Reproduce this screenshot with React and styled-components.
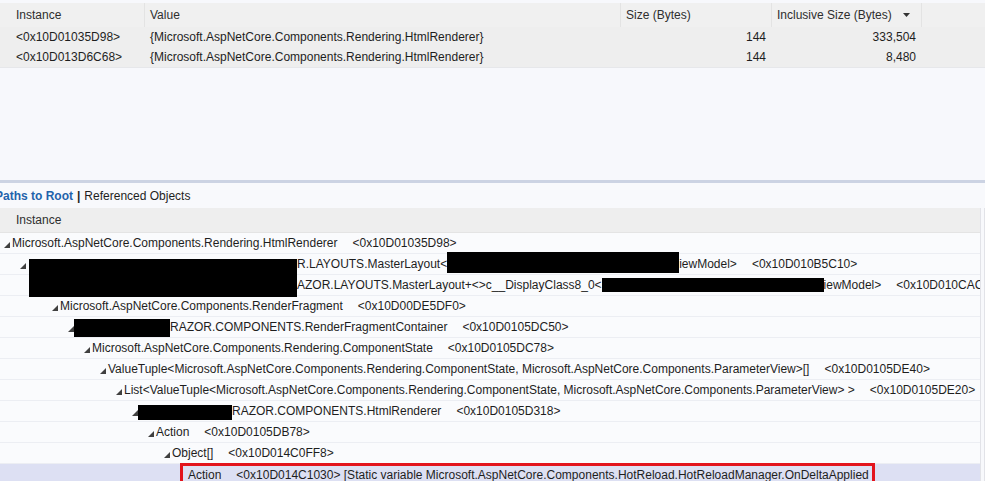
import React from "react"
import styled, { createGlobalStyle } from "styled-components"

const GlobalStyle = createGlobalStyle`
  html, body {
    margin: 0;
    padding: 0;
    background: #f7f8fc;
  }
  body {
    font-family: "Liberation Sans", Arial, sans-serif;
    font-size: 12px;
    color: #1e1e1e;
  }
`

const topRows = [
  { instance: "<0x10D01035D98>", value: "{Microsoft.AspNetCore.Components.Rendering.HtmlRenderer}", size: "144", inclusive: "333,504" },
  { instance: "<0x10D013D6C68>", value: "{Microsoft.AspNetCore.Components.Rendering.HtmlRenderer}", size: "144", inclusive: "8,480" },
]

const Expander = () => (
  <ExpanderBox>
    <svg width="6" height="6" viewBox="0 0 6 6">
      <polygon points="6,0 6,6 0,6" fill="#404040" />
    </svg>
  </ExpanderBox>
)

const SortArrow = () => (
  <svg width="7" height="4" viewBox="0 0 7 4" style={{ marginLeft: 11 }}>
    <polygon points="0,0 7,0 3.5,4" fill="#333" />
  </svg>
)

const App = () => {
  return (
    <>
      <GlobalStyle />
      <Window>
        <TopPanel>
          <HeaderRow>
            <HeaderCell $first>Instance</HeaderCell>
            <HeaderCell>Value</HeaderCell>
            <HeaderCell>Size (Bytes)</HeaderCell>
            <HeaderCell>
              Inclusive Size (Bytes)
              <SortArrow />
            </HeaderCell>
            <HeaderCell $last />
          </HeaderRow>
          {topRows.map((r) => (
            <DataRow key={r.instance}>
              <DataCell $first>{r.instance}</DataCell>
              <DataCell>{r.value}</DataCell>
              <DataCell $num>{r.size}</DataCell>
              <DataCell $num>{r.inclusive}</DataCell>
              <DataCell />
            </DataRow>
          ))}
        </TopPanel>

        <Splitter />

        <BottomPanel>
          <TabBar>
            <ActiveTab>Paths to Root</ActiveTab>
            <TabDivider>|</TabDivider>
            <Tab>Referenced Objects</Tab>
          </TabBar>
          <TreeArea>
            <TreeMain>
              <TreeHeader>Instance</TreeHeader>

              <TreeRow $level={0}>
                <Expander />
                <Name>Microsoft.AspNetCore.Components.Rendering.HtmlRenderer</Name>
                <Address>&lt;0x10D01035D98&gt;</Address>
              </TreeRow>

              <TreeRow $level={1}>
                <Expander />
                <Redact $w={268} $top={5} $h={16} $x={1} />
                <Name>R.LAYOUTS.MasterLayout&lt;</Name>
                <Redact $w={232} $top={-2} $h={21} />
                <Name>iewModel&gt;</Name>
                <Address>&lt;0x10D010B5C10&gt;</Address>
              </TreeRow>

              <TreeRow $level={1}>
                <Redact $w={268} $top={0} $h={22} $x={9} />
                <Name>AZOR.LAYOUTS.MasterLayout+&lt;&gt;c__DisplayClass8_0&lt;</Name>
                <Redact $w={222} $top={3} $h={14} />
                <Name>iewModel&gt;</Name>
                <Address>&lt;0x10D010CAC18&gt;</Address>
              </TreeRow>

              <TreeRow $level={3}>
                <Expander />
                <Name>Microsoft.AspNetCore.Components.RenderFragment</Name>
                <Address>&lt;0x10D00DE5DF0&gt;</Address>
              </TreeRow>

              <TreeRow $level={4}>
                <Expander />
                <Redact $w={96} $top={2} $h={18} $x={-2} />
                <Name>RAZOR.COMPONENTS.RenderFragmentContainer</Name>
                <Address>&lt;0x10D0105DC50&gt;</Address>
              </TreeRow>

              <TreeRow $level={5}>
                <Expander />
                <Name>Microsoft.AspNetCore.Components.Rendering.ComponentState</Name>
                <Address>&lt;0x10D0105DC78&gt;</Address>
              </TreeRow>

              <TreeRow $level={6}>
                <Expander />
                <Name>
                  ValueTuple&lt;Microsoft.AspNetCore.Components.Rendering.ComponentState,
                  Microsoft.AspNetCore.Components.ParameterView&gt;[]
                </Name>
                <Address>&lt;0x10D0105DE40&gt;</Address>
              </TreeRow>

              <TreeRow $level={7}>
                <Expander />
                <Name>
                  List&lt;ValueTuple&lt;Microsoft.AspNetCore.Components.Rendering.ComponentState,
                  Microsoft.AspNetCore.Components.ParameterView&gt; &gt;
                </Name>
                <Address>&lt;0x10D0105DE20&gt;</Address>
              </TreeRow>

              <TreeRow $level={8}>
                <Expander />
                <Redact $w={94} $top={4} $h={15} $x={-2} />
                <Name>RAZOR.COMPONENTS.HtmlRenderer</Name>
                <Address>&lt;0x10D0105D318&gt;</Address>
              </TreeRow>

              <TreeRow $level={9}>
                <Expander />
                <Name>Action</Name>
                <Address>&lt;0x10D0105DB78&gt;</Address>
              </TreeRow>

              <TreeRow $level={10}>
                <Expander />
                <Name>Object[]</Name>
                <Address>&lt;0x10D014C0FF8&gt;</Address>
              </TreeRow>

              <TreeRow $level={11} $selected>
                <Outline>
                  <Name>Action</Name>
                  <Address>&lt;0x10D014C1030&gt;</Address>
                  <Name>
                    &nbsp;[Static variable Microsoft.AspNetCore.Components.HotReload.HotReloadManager.OnDeltaApplied
                  </Name>
                </Outline>
              </TreeRow>
            </TreeMain>
            <Gutter />
          </TreeArea>
        </BottomPanel>
      </Window>
    </>
  )
}

export default App

const Window = styled.div`
  width: 985px;
  height: 481px;
  overflow: hidden;
  display: flex;
  flex-direction: column;
  background: #f7f8fc;
`

const TopPanel = styled.div`
  height: 180px;
  flex-shrink: 0;
  box-sizing: border-box;
  padding-top: 3px;
  background: #f7f8fc;
`

const columns = "145px 476px 151px 150px 1fr"

const HeaderRow = styled.div`
  display: grid;
  grid-template-columns: ${columns};
  height: 24px;
  background: #f0f0f0;
`

const HeaderCell = styled.div`
  display: flex;
  align-items: center;
  padding-left: ${({ $first }) => ($first ? "16px" : "5px")};
  border-right: ${({ $last }) => ($last ? "none" : "1px solid #e3e3e3")};
  color: #2e2e2e;
  white-space: nowrap;
`

const DataRow = styled.div`
  display: grid;
  grid-template-columns: ${columns};
  height: 20px;
  background: #eeeeee;

  &:last-child {
    border-bottom: 1px solid #e6e7ea;
  }
`

const DataCell = styled.div`
  display: flex;
  align-items: center;
  justify-content: ${({ $num }) => ($num ? "flex-end" : "flex-start")};
  padding-left: ${({ $first }) => ($first ? "16px" : "5px")};
  padding-right: ${({ $num }) => ($num ? "6px" : "0")};
  white-space: nowrap;
`

const Splitter = styled.div`
  height: 3px;
  flex-shrink: 0;
  background: #ccd3e3;
`

const BottomPanel = styled.div`
  flex: 1;
  display: flex;
  flex-direction: column;
  overflow: hidden;
  background: #f8f9fc;
`

const TabBar = styled.div`
  height: 25px;
  flex-shrink: 0;
  display: flex;
  align-items: center;
  white-space: nowrap;
`

const ActiveTab = styled.span`
  margin-left: -5px;
  font-weight: bold;
  color: #1f63ab;
`

const TabDivider = styled.span`
  margin: 0 4px;
  font-weight: bold;
  color: #1e1e1e;
`

const Tab = styled.span`
  color: #1e1e1e;
`

const TreeArea = styled.div`
  flex: 1;
  display: flex;
  overflow: hidden;
`

const TreeMain = styled.div`
  width: 980px;
  flex-shrink: 0;
  overflow: hidden;
`

const Gutter = styled.div`
  flex: 1;
  border-left: 1px solid #e2e3e8;
  border-right: 1px solid #e2e3e8;
  background: #f8f9fc;
`

const TreeHeader = styled.div`
  height: 25px;
  box-sizing: border-box;
  display: flex;
  align-items: center;
  padding-left: 16px;
  background: #eeeeee;
  border-bottom: 1px solid #e4e4e4;
  color: #2e2e2e;
`

const TreeRow = styled.div`
  height: 21px;
  box-sizing: border-box;
  display: flex;
  align-items: center;
  padding-left: ${({ $level }) => $level * 16 + 4}px;
  background: ${({ $selected }) => ($selected ? "#dde0f3" : "#fafbfd")};
  border-bottom: 1px solid ${({ $selected }) => ($selected ? "#dde0f3" : "#eceef3")};
  white-space: nowrap;
  overflow: visible;
`

const ExpanderBox = styled.span`
  width: 8px;
  flex-shrink: 0;
  display: flex;
  align-items: center;
  padding-top: 3px;
`

const Name = styled.span`
  flex-shrink: 0;
  white-space: pre;
`

const Address = styled.span`
  flex-shrink: 0;
  margin-left: 15px;
`

const Redact = styled.span`
  flex-shrink: 0;
  align-self: flex-start;
  width: ${({ $w }) => $w}px;
  height: ${({ $h }) => $h}px;
  margin-top: ${({ $top }) => $top}px;
  margin-left: ${({ $x }) => $x || 0}px;
  background: #000;
  position: relative;
  z-index: 1;
`

const Outline = styled.span`
  align-self: flex-start;
  display: flex;
  align-items: flex-start;
  height: 30px;
  box-sizing: border-box;
  margin-top: -1px;
  padding: 2px 3px 0 5px;
  border: 3px solid #e3141c;
  line-height: 14px;
`
